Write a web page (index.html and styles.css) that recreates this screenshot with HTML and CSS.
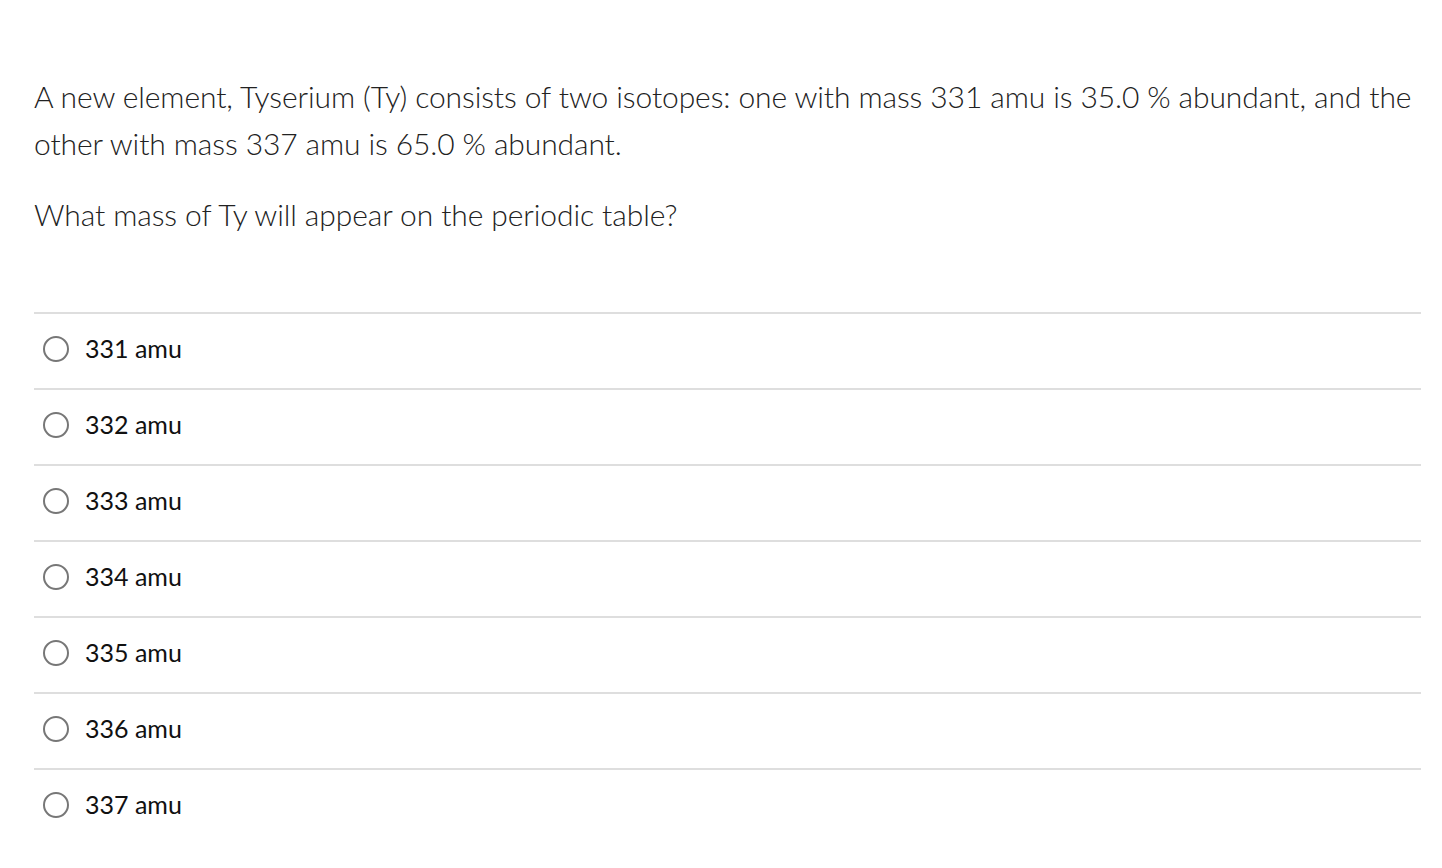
FILE: index.html
```html
<!DOCTYPE html>
<html>
<head>
<meta charset="utf-8">
<link rel="stylesheet" href="styles.css">
</head>
<body>
<div class="page">
  <div class="question">
    <p class="para">A new element, Tyserium (Ty) consists of two isotopes: one with mass 331 amu is 35.0&nbsp;% abundant, and the other with mass 337 amu is 65.0&nbsp;% abundant.</p>
    <p class="para">What mass of Ty will appear on the periodic table?</p>
  </div>
  <ul class="options">
    <li class="option"><span class="radio"></span><span class="label">331 amu</span></li>
    <li class="option"><span class="radio"></span><span class="label">332 amu</span></li>
    <li class="option"><span class="radio"></span><span class="label">333 amu</span></li>
    <li class="option"><span class="radio"></span><span class="label">334 amu</span></li>
    <li class="option"><span class="radio"></span><span class="label">335 amu</span></li>
    <li class="option"><span class="radio"></span><span class="label">336 amu</span></li>
    <li class="option"><span class="radio"></span><span class="label">337 amu</span></li>
  </ul>
</div>
</body>
</html>
```
FILE: styles.css
```css
html, body {
  margin: 0;
  padding: 0;
  background: #fff;
}
.page {
  padding: 73px 21px 0 34px;
  font-family: Lato, "Open Sans", sans-serif;
}
.question {
  padding-bottom: 50px;
}
.para {
  margin: 0 0 24px 0;
  font-size: 30px;
  font-weight: 300;
  line-height: 47px;
  letter-spacing: -0.1px;
  color: #222;
}
.options {
  list-style: none;
  margin: 0;
  padding: 0;
}
.option {
  display: flex;
  align-items: center;
  box-sizing: border-box;
  height: 76px;
  padding-bottom: 6px;
  border-top: 2px solid #dedede;
  padding-left: 9px;
}
.radio {
  width: 22px;
  height: 22px;
  border: 2px solid #777;
  border-radius: 50%;
  box-sizing: content-box;
  flex: none;
  position: relative;
  top: 1px;
}
.label {
  margin-left: 16px;
  font-size: 25px;
  color: #111;
}
```
